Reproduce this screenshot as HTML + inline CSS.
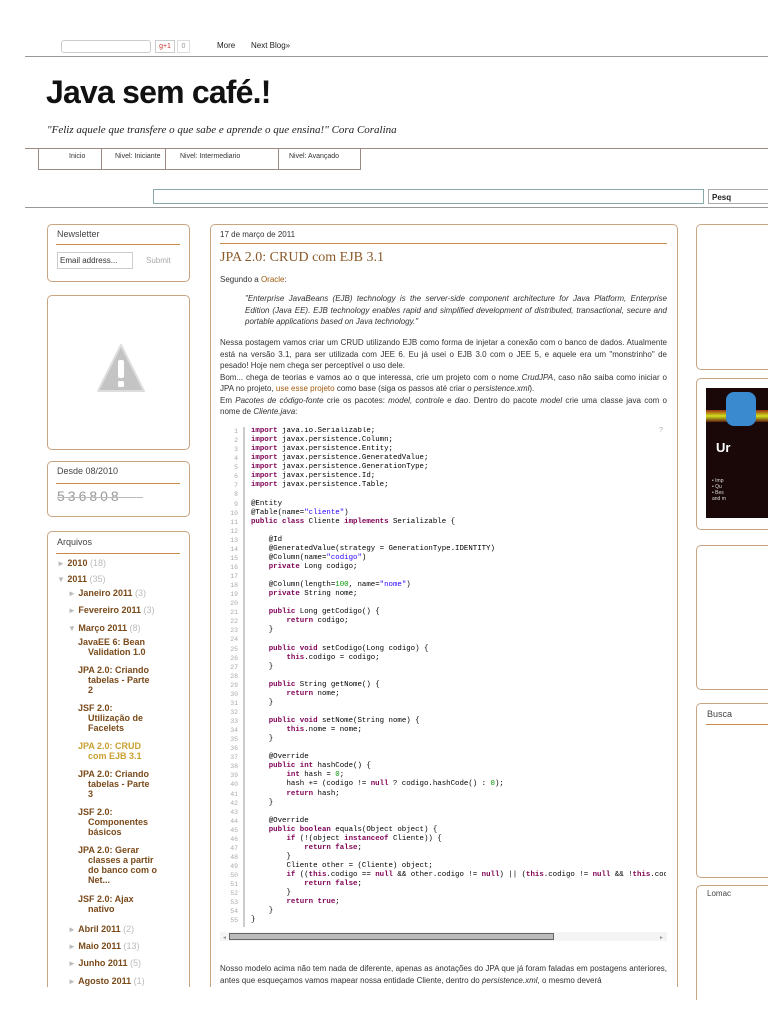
<!DOCTYPE html>
<html style="width:768px;height:1024px;overflow:hidden"><head><meta charset="utf-8"><style>
*{margin:0;padding:0;box-sizing:border-box}
body{width:768px;height:1024px;overflow:hidden;background:#fff;font-family:"Liberation Sans",sans-serif;color:#333;position:relative}
.a{position:absolute}
.box{position:absolute;border:1px solid #c8a582;border-radius:5px;background:#fff}
.h{font-size:9px;color:#444}
.hl{position:absolute;height:1px;background:#c88a4a}
.arch{font-size:9px;font-weight:bold;color:#7a4a1a;position:absolute;white-space:nowrap;line-height:10px}
.arch i{font-style:normal;font-weight:normal;color:#bbb}
.tri{color:#bbb;font-size:8px;font-weight:normal}
.p{position:absolute;left:220px;width:447px;font-size:8px;line-height:11.5px;text-align:justify;color:#333}
.code{position:absolute;left:226px;top:427px;font-family:"Liberation Mono",monospace;font-size:7.4px;line-height:9.07px;white-space:pre;color:#000}
.ln{position:absolute;left:226px;top:427px;width:12px;text-align:right;font-family:"Liberation Mono",monospace;font-size:6.5px;line-height:9.07px;color:#aaa;white-space:pre}
.k{color:#7f0055;font-weight:bold}.s{color:#2a00ff}.n{color:#090}
</style></head><body>
<div class="a" style="left:61px;top:40px;width:90px;height:13px;border:1px solid #ccc;border-radius:3px"></div>
<div class="a" style="left:155px;top:40px;width:20px;height:13px;border:1px solid #ccc;font-size:7px;color:#c33;text-align:center;line-height:11px">g+1</div>
<div class="a" style="left:177px;top:40px;width:13px;height:13px;border:1px solid #ddd;font-size:7px;color:#999;text-align:center;line-height:11px">0</div>
<div class="a" style="left:217px;top:41px;font-size:8px;color:#222">More</div>
<div class="a" style="left:251px;top:41px;font-size:8px;color:#222">Next Blog»</div>
<div class="a" style="left:25px;top:56px;width:743px;height:1px;background:#999"></div>
<div class="a" style="left:46px;top:74px;font-size:32px;font-weight:bold;color:#111;letter-spacing:-0.8px">Java sem café.!</div>
<div class="a" style="left:47px;top:124px;font-size:11px;font-style:italic;font-family:'Liberation Serif',serif;color:#222">"Feliz aquele que transfere o que sabe e aprende o que ensina!" Cora Coralina</div>
<div class="a" style="left:25px;top:148px;width:743px;height:1px;background:#9a8a80"></div>
<div class="a" style="left:38px;top:148px;width:323px;height:22px;border:1px solid #9a8a80;border-top:none;font-size:7px;color:#333">
<span class="a" style="left:30px;top:5px">Inicio</span>
<span class="a" style="left:62px;top:0;width:1px;height:21px;background:#9a8a80"></span>
<span class="a" style="left:76px;top:5px">Nivel: Iniciante</span>
<span class="a" style="left:126px;top:0;width:1px;height:21px;background:#9a8a80"></span>
<span class="a" style="left:141px;top:5px">Nivel: Intermediario</span>
<span class="a" style="left:239px;top:0;width:1px;height:21px;background:#9a8a80"></span>
<span class="a" style="left:250px;top:5px">Nivel: Avançado</span>
</div>
<div class="a" style="left:153px;top:189px;width:551px;height:15px;border:1px solid #8aa;"></div>
<div class="a" style="left:708px;top:189px;width:60px;height:15px;border:1px solid #aaa;border-right:none;font-size:8px;font-weight:bold;padding:3px 3px;color:#222">Pesq</div>
<div class="a" style="left:25px;top:207px;width:743px;height:1px;background:#999"></div>

<div class="box" style="left:47px;top:224px;width:143px;height:58px"></div>
<div class="a h" style="left:57px;top:229px">Newsletter</div>
<div class="hl" style="left:56px;top:244px;width:124px"></div>
<div class="a" style="left:57px;top:252px;width:76px;height:17px;border:1px solid #ccc;font-size:8px;padding:3px 2px;color:#333">Email address...</div>
<div class="a" style="left:146px;top:256px;font-size:8px;color:#aaa">Submit</div>
<div class="box" style="left:47px;top:295px;width:143px;height:155px"></div>
<svg class="a" style="left:96px;top:342px" width="50" height="52" viewBox="0 0 50 52"><path d="M25 3 L48 49 L2 49 Z" fill="#c4c4c4" stroke="#ddd" stroke-width="2" stroke-linejoin="round"/><rect x="22" y="18" width="6" height="18" rx="2" fill="#fff"/><rect x="22" y="39" width="6" height="6" rx="1.5" fill="#fff"/></svg>
<div class="box" style="left:47px;top:461px;width:143px;height:56px"></div>
<div class="a h" style="left:57px;top:466px">Desde 08/2010</div>
<div class="hl" style="left:56px;top:483px;width:124px"></div>
<div class="a" style="left:57px;top:488px;font-size:14px;color:#999;letter-spacing:3px">536808</div>
<div class="a" style="left:57px;top:497px;width:86px;height:1px;background:#bbb"></div>
<div class="box" style="left:47px;top:531px;width:143px;height:480px"></div>
<div class="a h" style="left:57px;top:537px">Arquivos</div>
<div class="hl" style="left:56px;top:553px;width:124px"></div>
<div class="arch" style="left:57px;top:558px"><span class="tri">►</span> 2010 <i>(18)</i></div>
<div class="arch" style="left:57px;top:574px"><span class="tri">▼</span> 2011 <i>(35)</i></div>
<div class="arch" style="left:68px;top:588px"><span class="tri">►</span> Janeiro 2011 <i>(3)</i></div>
<div class="arch" style="left:68px;top:605px"><span class="tri">►</span> Fevereiro 2011 <i>(3)</i></div>
<div class="arch" style="left:68px;top:623px"><span class="tri">▼</span> Março 2011 <i>(8)</i></div>
<div class="arch" style="left:78px;top:637px">JavaEE 6: Bean<br>&nbsp;&nbsp;&nbsp;&nbsp;Validation 1.0</div>
<div class="arch" style="left:78px;top:665px">JPA 2.0: Criando<br>&nbsp;&nbsp;&nbsp;&nbsp;tabelas - Parte<br>&nbsp;&nbsp;&nbsp;&nbsp;2</div>
<div class="arch" style="left:78px;top:703px">JSF 2.0:<br>&nbsp;&nbsp;&nbsp;&nbsp;Utilização de<br>&nbsp;&nbsp;&nbsp;&nbsp;Facelets</div>
<div class="arch" style="left:78px;top:741px;color:#c9a030">JPA 2.0: CRUD<br>&nbsp;&nbsp;&nbsp;&nbsp;com EJB 3.1</div>
<div class="arch" style="left:78px;top:769px">JPA 2.0: Criando<br>&nbsp;&nbsp;&nbsp;&nbsp;tabelas - Parte<br>&nbsp;&nbsp;&nbsp;&nbsp;3</div>
<div class="arch" style="left:78px;top:807px">JSF 2.0:<br>&nbsp;&nbsp;&nbsp;&nbsp;Componentes<br>&nbsp;&nbsp;&nbsp;&nbsp;básicos</div>
<div class="arch" style="left:78px;top:845px">JPA 2.0: Gerar<br>&nbsp;&nbsp;&nbsp;&nbsp;classes a partir<br>&nbsp;&nbsp;&nbsp;&nbsp;do banco com o<br>&nbsp;&nbsp;&nbsp;&nbsp;Net...</div>
<div class="arch" style="left:78px;top:894px">JSF 2.0: Ajax<br>&nbsp;&nbsp;&nbsp;&nbsp;nativo</div>
<div class="arch" style="left:68px;top:924px"><span class="tri">►</span> Abril 2011 <i>(2)</i></div>
<div class="arch" style="left:68px;top:941px"><span class="tri">►</span> Maio 2011 <i>(13)</i></div>
<div class="arch" style="left:68px;top:958px"><span class="tri">►</span> Junho 2011 <i>(5)</i></div>
<div class="arch" style="left:68px;top:976px"><span class="tri">►</span> Agosto 2011 <i>(1)</i></div>

<div class="box" style="left:210px;top:224px;width:468px;height:790px"></div>
<div class="a" style="left:220px;top:230px;font-size:8px;color:#333">17 de março de 2011</div>
<div class="hl" style="left:220px;top:243px;width:447px"></div>
<div class="a" style="left:220px;top:250px;font-size:14px;font-family:'Liberation Serif',serif;color:#8a5a2a">JPA 2.0: CRUD com EJB 3.1</div>
<div class="p" style="top:274px">Segundo a <span style="color:#a05a10">Oracle</span>:</div>
<div class="p" style="top:293px;left:245px;width:422px;font-style:italic">"Enterprise JavaBeans (EJB) technology is the server-side component architecture for Java Platform, Enterprise Edition (Java EE). EJB technology enables rapid and simplified development of distributed, transactional, secure and portable applications based on Java technology."</div>
<div class="p" style="top:337px">Nessa postagem vamos criar um CRUD utilizando EJB como forma de injetar a conexão com o banco de dados. Atualmente está na versão 3.1, para ser utilizada com JEE 6. Eu já usei o EJB 3.0 com o JEE 5, e aquele era um "monstrinho" de pesado! Hoje nem chega ser perceptível o uso dele.<br>Bom... chega de teorias e vamos ao o que interessa, crie um projeto com o nome <i>CrudJPA</i>, caso não saiba como iniciar o JPA no projeto, <span style="color:#a05a10">use esse projeto</span> como base (siga os passos até criar o <i>persistence.xml</i>).<br>Em <i>Pacotes de código-fonte</i> crie os pacotes: <i>model, controle</i> e <i>dao</i>. Dentro do pacote <i>model</i> crie uma classe java com o nome de <i>Cliente.java</i>:</div>
<div class="a" style="left:243px;top:427px;width:2px;height:500px;background:#ccc"></div>
<div class="a" style="left:659px;top:427px;font-size:7px;color:#aaa">?</div>
<div class="ln">1
2
3
4
5
6
7
8
9
10
11
12
13
14
15
16
17
18
19
20
21
22
23
24
25
26
27
28
29
30
31
32
33
34
35
36
37
38
39
40
41
42
43
44
45
46
47
48
49
50
51
52
53
54
55</div>
<div class="code" style="left:251px;width:415px;overflow:hidden"><span class="k">import</span> java.io.Serializable;
<span class="k">import</span> javax.persistence.Column;
<span class="k">import</span> javax.persistence.Entity;
<span class="k">import</span> javax.persistence.GeneratedValue;
<span class="k">import</span> javax.persistence.GenerationType;
<span class="k">import</span> javax.persistence.Id;
<span class="k">import</span> javax.persistence.Table;

@Entity
@Table(name=<span class="s">"cliente"</span>)
<span class="k">public class</span> Cliente <span class="k">implements</span> Serializable {

    @Id
    @GeneratedValue(strategy = GenerationType.IDENTITY)
    @Column(name=<span class="s">"codigo"</span>)
    <span class="k">private</span> Long codigo;

    @Column(length=<span class="n">100</span>, name=<span class="s">"nome"</span>)
    <span class="k">private</span> String nome;

    <span class="k">public</span> Long getCodigo() {
        <span class="k">return</span> codigo;
    }

    <span class="k">public void</span> setCodigo(Long codigo) {
        <span class="k">this</span>.codigo = codigo;
    }

    <span class="k">public</span> String getNome() {
        <span class="k">return</span> nome;
    }

    <span class="k">public void</span> setNome(String nome) {
        <span class="k">this</span>.nome = nome;
    }

    @Override
    <span class="k">public int</span> hashCode() {
        <span class="k">int</span> hash = <span class="n">0</span>;
        hash += (codigo != <span class="k">null</span> ? codigo.hashCode() : <span class="n">0</span>);
        <span class="k">return</span> hash;
    }

    @Override
    <span class="k">public boolean</span> equals(Object object) {
        <span class="k">if</span> (!(object <span class="k">instanceof</span> Cliente)) {
            <span class="k">return false</span>;
        }
        Cliente other = (Cliente) object;
        <span class="k">if</span> ((<span class="k">this</span>.codigo == <span class="k">null</span> &amp;&amp; other.codigo != <span class="k">null</span>) || (<span class="k">this</span>.codigo != <span class="k">null</span> &amp;&amp; !<span class="k">this</span>.codigo.equals(other.codigo))) {
            <span class="k">return false</span>;
        }
        <span class="k">return true</span>;
    }
}</div>
<div class="a" style="left:220px;top:932px;width:447px;height:9px;background:#f4f4f4"></div>
<div class="a" style="left:222px;top:935px;font-size:5px;color:#999">◄</div>
<div class="a" style="left:229px;top:933px;width:325px;height:7px;background:#bbb;border:1px solid #666"></div>
<div class="a" style="left:659px;top:935px;font-size:5px;color:#999">►</div>
<div class="p" style="top:963px">Nosso modelo acima não tem nada de diferente, apenas as anotações do JPA que já foram faladas em postagens anteriores, antes que esqueçamos vamos mapear nossa entidade Cliente, dentro do <i>persistence.xml</i>, o mesmo deverá</div>

<div class="box" style="left:696px;top:224px;width:90px;height:146px"></div>
<div class="box" style="left:696px;top:378px;width:90px;height:152px"></div>
<div class="a" style="left:706px;top:388px;width:62px;height:130px;background:#1a0808;overflow:hidden">
<div class="a" style="left:0;top:22px;width:62px;height:12px;background:linear-gradient(#9a3010,#d0e020,#602010)"></div>
<div class="a" style="left:20px;top:4px;width:30px;height:34px;border-radius:8px;background:#3a8ad0"></div>
<div class="a" style="left:10px;top:52px;font-size:13px;font-weight:bold;color:#fff">Ur</div>
<div class="a" style="left:6px;top:90px;font-size:5px;line-height:6px;color:#ddd">• Imp<br>• Qu<br>• Bes<br>and m</div>
</div>
<div class="box" style="left:696px;top:545px;width:90px;height:145px"></div>
<div class="box" style="left:696px;top:703px;width:90px;height:175px"></div>
<div class="a h" style="left:707px;top:709px">Busca</div>
<div class="hl" style="left:706px;top:724px;width:62px"></div>
<div class="box" style="left:696px;top:885px;width:90px;height:130px"></div>
<div class="a" style="left:707px;top:889px;font-size:8px;color:#444">Lomac</div>

<div class="a" style="left:0;top:987px;width:690px;height:37px;background:#fff"></div>
<div class="a" style="left:690px;top:1000px;width:78px;height:24px;background:#fff"></div>
</body></html>
